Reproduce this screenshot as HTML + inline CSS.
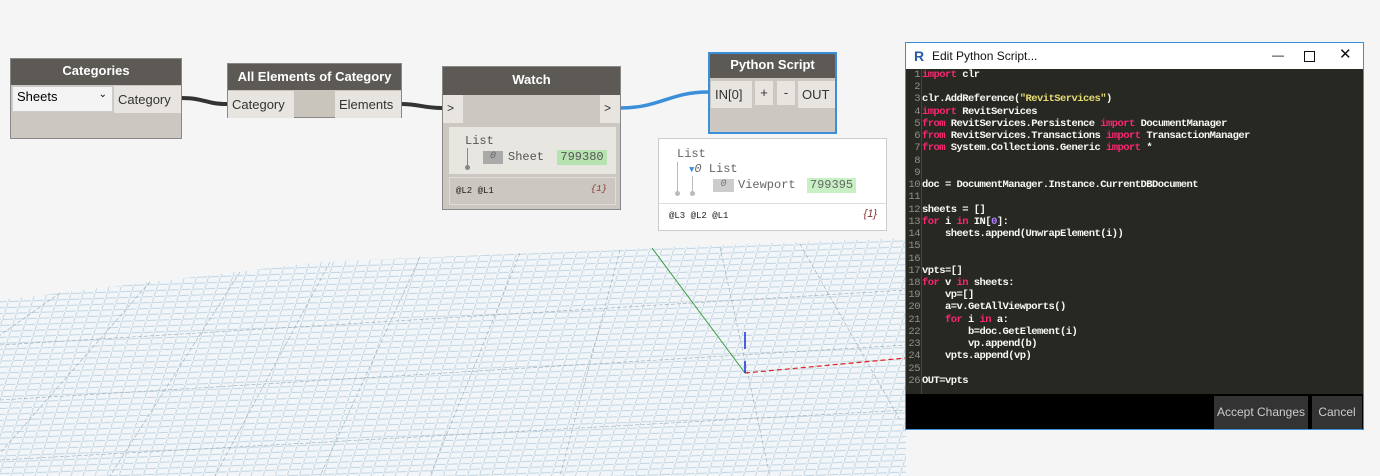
<!DOCTYPE html>
<html><head><meta charset="utf-8"><style>
body{margin:0;width:1380px;height:476px;background:#f5f5f5;position:relative;overflow:hidden;font-family:"Segoe UI","Liberation Sans",sans-serif}
.a{position:absolute;box-sizing:border-box}
.hd{background:#5d5a56;color:#fff;font-weight:bold;font-size:13px;text-align:center;white-space:nowrap}
.pt{background:#e8e5e0;color:#333;font-size:13px;line-height:27px;padding:0 4px;white-space:nowrap}
.mono{font-family:"Liberation Mono",monospace}
pre{margin:0;font-family:"Liberation Mono",monospace;font-size:10.5px;line-height:12.24px;color:#f8f8f2;font-weight:bold}
.code{letter-spacing:-0.55px}
.k{color:#f92672}.s{color:#e6db74}.n{color:#ae81ff}
</style></head><body>
<svg class="a" style="left:0;top:0" width="1380" height="476">
<defs><pattern id="g" width="12" height="6" patternUnits="userSpaceOnUse" patternTransform="skewX(-20) rotate(-2)">
<rect width="12" height="6" fill="#f2f6f9"/><path d="M0 5.5H10M11.5 0V5" stroke="#c2d5e2" stroke-width="1"/></pattern></defs>
<polygon points="0,300 320,262 650,248 906,238 906,476 0,476" fill="url(#g)"/>
<g stroke="#98abb8" stroke-width="0.6" stroke-dasharray="4 2">
<line x1="60" y1="293" x2="-200" y2="476"/><line x1="150" y1="282" x2="-20" y2="476"/><line x1="240" y1="272" x2="110" y2="476"/><line x1="330" y1="262" x2="215" y2="476"/><line x1="420" y1="257" x2="320" y2="476"/><line x1="520" y1="253" x2="430" y2="476"/><line x1="620" y1="250" x2="560" y2="476"/><line x1="720" y1="247" x2="770" y2="476"/><line x1="800" y1="244" x2="900" y2="420"/>
<line x1="0" y1="345" x2="906" y2="290"/><line x1="0" y1="400" x2="906" y2="345"/><line x1="0" y1="460" x2="906" y2="410"/>
</g>
<line x1="652" y1="248" x2="745" y2="373" stroke="#3a9a3a" stroke-width="1"/>
<line x1="745" y1="373" x2="906" y2="358" stroke="#e02020" stroke-width="1.2" stroke-dasharray="5 3"/>
<line x1="745" y1="332" x2="745" y2="349" stroke="#1b2ed8" stroke-width="1.5"/>
<line x1="745" y1="361" x2="745" y2="373" stroke="#1b2ed8" stroke-width="1.5"/>
<path d="M181 98 C205 98,205 104,227 104" stroke="#333" stroke-width="4" fill="none"/>
<path d="M401 104 C420 104,422 108,442 108" stroke="#333" stroke-width="4" fill="none"/>
<path d="M620 108 C660 108,670 92,708 92" stroke="#3a8fd8" stroke-width="3.5" fill="none"/>
</svg>

<div class="a" style="left:10px;top:58px;width:172px;height:81px;background:#ccc8c1;border:1px solid #888">
<div class="hd" style="height:26px;line-height:24px">Categories</div>
<div class="a" style="left:1px;top:27px;width:101px;height:26px;background:#f4f4f4;border:1px solid #ccc;font-size:13px;padding:2px 4px">Sheets<span style="position:absolute;right:5px;top:2px;font-size:10px">⌄</span></div>
<div class="a pt" style="left:103px;top:27px;width:67px;height:27px">Category</div>
</div>

<div class="a" style="left:227px;top:63px;width:175px;height:55px;background:#c9c4bc;border:1px solid #888">
<div class="hd" style="height:26px;line-height:25px">All Elements of Category</div>
<div class="a pt" style="left:0;top:27px;width:66px">Category</div>
<div class="a pt" style="left:107px;top:27px;width:66px">Elements</div>
</div>

<div class="a" style="left:442px;top:66px;width:179px;height:144px;background:#ccc8c1;border:1px solid #888">
<div class="hd" style="height:28px;line-height:26px">Watch</div>
<div class="a pt" style="left:0;top:28px;width:20px;height:28px;font-size:12px">&gt;</div>
<div class="a pt" style="left:157px;top:28px;width:20px;height:28px;font-size:12px">&gt;</div>
<div class="a" style="left:6px;top:60px;width:167px;height:47px;background:#e8e6e1">
<div class="a mono" style="left:16px;top:7px;font-size:12px;color:#555">List</div>
<div class="a" style="left:18px;top:21px;width:1px;height:18px;background:#888"></div>
<div class="a" style="left:16px;top:38px;width:5px;height:5px;border-radius:3px;background:#888"></div>
<div class="a mono" style="left:34px;top:24px;width:20px;height:13px;background:#aaa;color:#666;font-size:10px;text-align:center;font-style:italic">0</div>
<div class="a mono" style="left:59px;top:23px;font-size:12px;color:#555">Sheet</div>
<div class="a mono" style="left:108px;top:23px;width:50px;height:15px;background:#b7e3b0;color:#555;font-size:12px;text-align:center">799380</div>
</div>
<div class="a mono" style="left:6px;top:110px;width:167px;height:28px;border:1px solid #ddd;font-size:9px;color:#222;padding:8px 6px">@L2 @L1<span style="position:absolute;right:8px;top:6px;font-style:italic;color:#833">{1}</span></div>
</div>

<div class="a" style="left:708px;top:52px;width:129px;height:82px;background:#ccc8c1;border:2px solid #3b8fd9">
<div class="hd" style="height:24px;line-height:22px">Python Script</div>
<div class="a pt" style="left:1px;top:27px;width:41px;height:27px">IN[0]</div>
<div class="a pt" style="left:45px;top:27px;width:18px;height:24px;padding:0;text-align:center;line-height:24px">+</div>
<div class="a pt" style="left:67px;top:27px;width:18px;height:24px;padding:0;text-align:center;line-height:24px">-</div>
<div class="a pt" style="left:88px;top:27px;width:37px;height:27px">OUT</div>
</div>

<div class="a" style="left:658px;top:138px;width:229px;height:93px;background:#fff;border:1px solid #ccc">
<div class="a mono" style="left:18px;top:8px;font-size:12px;color:#666">List</div>
<div class="a" style="left:18px;top:23px;width:1px;height:30px;background:#bbb"></div>
<div class="a" style="left:16px;top:52px;width:5px;height:5px;border-radius:3px;background:#bbb"></div>
<div class="a mono" style="left:30px;top:23px;font-size:12px;color:#666"><span style="color:#3b8fd9;font-size:9px">▼</span><i>0</i> List</div>
<div class="a" style="left:33px;top:37px;width:1px;height:16px;background:#bbb"></div>
<div class="a" style="left:31px;top:52px;width:5px;height:5px;border-radius:3px;background:#bbb"></div>
<div class="a mono" style="left:54px;top:40px;width:21px;height:13px;background:#ccc;color:#777;font-size:10px;text-align:center;font-style:italic">0</div>
<div class="a mono" style="left:79px;top:39px;font-size:12px;color:#666">Viewport</div>
<div class="a mono" style="left:148px;top:39px;width:49px;height:15px;background:#c7f0c4;color:#666;font-size:12px;text-align:center">799395</div>
<div class="a" style="left:0;top:64px;width:227px;height:1px;background:#ddd"></div>
<div class="a mono" style="left:10px;top:72px;font-size:9px;color:#222">@L3 @L2 @L1</div>
<div class="a" style="right:9px;top:69px;font-size:11px;font-style:italic;color:#833">{1}</div>
</div>

<div class="a" style="left:905px;top:42px;width:459px;height:388px;background:#000;border:1px solid #3b8fd9">
<div class="a" style="left:0;top:0;width:457px;height:26px;background:#fff;font-size:12px;color:#111;line-height:26px;padding-left:26px">Edit Python Script...
<span style="position:absolute;left:8px;top:0;color:#2a5aa8;font-weight:bold;font-size:14px">R</span>
<span style="position:absolute;left:366px;top:-1px">—</span>
<span style="position:absolute;left:398px;top:8px;width:9px;height:9px;border:1px solid #111;line-height:0"></span>
<span style="position:absolute;left:433px;top:-1px;font-size:15px">✕</span></div>
<div class="a" style="left:0;top:26px;width:457px;height:325px;background:#272822">
<pre class="a" style="left:0;top:0;color:#8f908a;width:14px;text-align:right;font-weight:normal;letter-spacing:-0.5px">1
2
3
4
5
6
7
8
9
10
11
12
13
14
15
16
17
18
19
20
21
22
23
24
25
26</pre>
<div class="a" style="left:15px;top:0;width:1px;height:325px;background:#444"></div>
<pre class="a code" style="left:16px;top:0"><span class="k">import</span> clr

clr.AddReference(<span class="s">"RevitServices"</span>)
<span class="k">import</span> RevitServices
<span class="k">from</span> RevitServices.Persistence <span class="k">import</span> DocumentManager
<span class="k">from</span> RevitServices.Transactions <span class="k">import</span> TransactionManager
<span class="k">from</span> System.Collections.Generic <span class="k">import</span> *


doc = DocumentManager.Instance.CurrentDBDocument

sheets = []
<span class="k">for</span> i <span class="k">in</span> IN[<span class="n">0</span>]:
    sheets.append(UnwrapElement(i))


vpts=[]
<span class="k">for</span> v <span class="k">in</span> sheets:
    vp=[]
    a=v.GetAllViewports()
    <span class="k">for</span> i <span class="k">in</span> a:
        b=doc.GetElement(i)
        vp.append(b)
    vpts.append(vp)

OUT=vpts</pre>
</div>
<div class="a" style="left:308px;top:353px;width:94px;height:33px;background:#333;color:#ccc;font-size:12px;line-height:33px;text-align:center">Accept Changes</div>
<div class="a" style="left:406px;top:353px;width:50px;height:33px;background:#333;color:#ccc;font-size:12px;line-height:33px;text-align:center">Cancel</div>
</div>
</body></html>
